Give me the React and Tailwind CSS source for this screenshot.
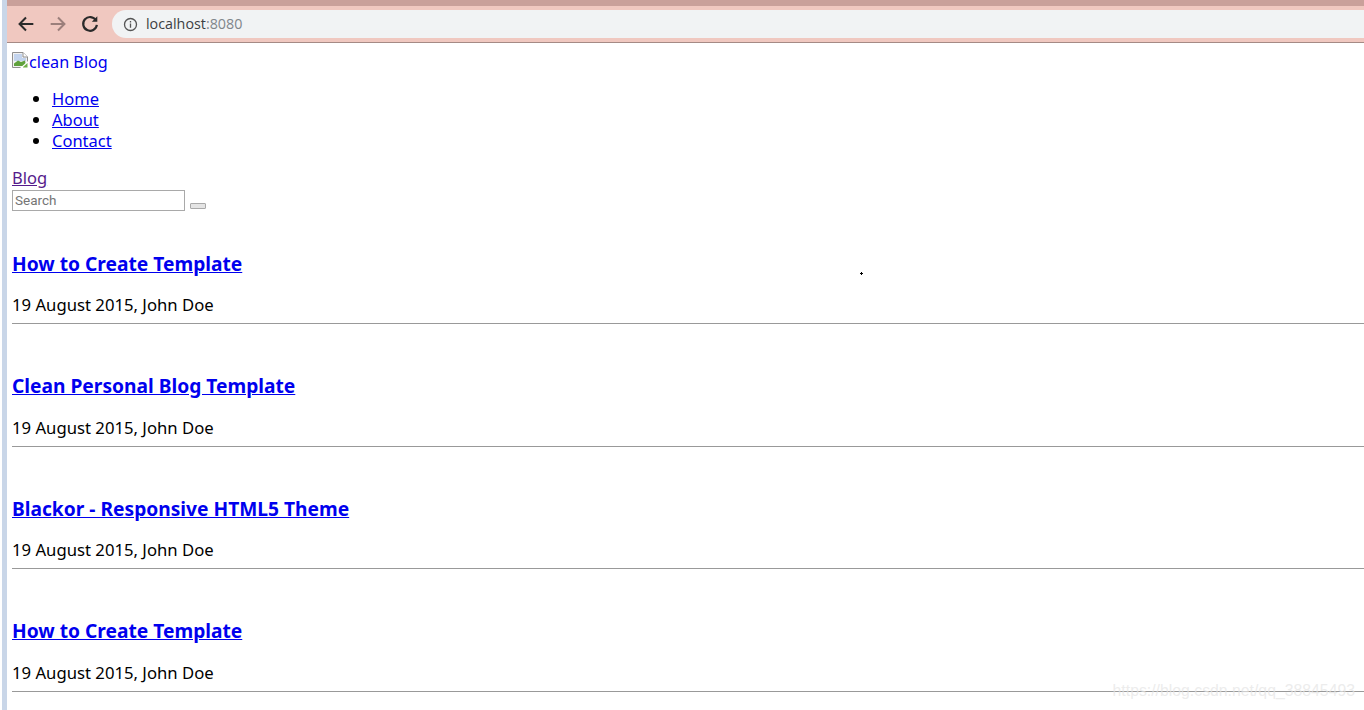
import React from 'react';

const posts = [
  'How to Create Template',
  'Clean Personal Blog Template',
  'Blackor - Responsive HTML5 Theme',
  'How to Create Template',
];

function BrokenImage() {
  return (
    <svg viewBox="0 0 16 16" className="w-4 h-4 shrink-0 mr-[1px] mt-[1px]">
      <path d="M0.5 0.5H11L15.5 5V15.5H0.5Z" fill="#f2f2f2" stroke="#8f8f8f" />
      <path d="M2 2H10V6H14V9H2Z" fill="#c3d4ee" />
      <path d="M2 14V11.5L6 8.5L9 10L13 8.5L14 14Z" fill="#5fa13c" />
      <path d="M11 .5V5H15.5" fill="#fff" stroke="#8f8f8f" />
      <path d="M16 9V16H8Z" fill="#fff" />
      <path d="M11 15L15.5 11V15.5H11Z" fill="#6fae46" />
    </svg>
  );
}

export default function App() {
  return (
    <div className="flex h-[710px] w-[1364px] overflow-hidden bg-white font-['Noto_Sans',sans-serif] text-black">

      {/* Faixa esquerda */}
      <div className="w-[7px] shrink-0 pl-[2px]">
        <div className="h-full bg-[#c9d6e8]" />
      </div>

      <div className="flex-1 min-w-0">

        {/* Barra do navegador */}
        <div className="h-[43px] border-b border-[#a58a85] bg-[#f0c8c0] border-t-[6px] border-t-[#c9a09a]">
          <div className="flex items-center h-[32px] pt-[4px]">
            <svg viewBox="0 0 24 24" className="w-[22px] h-[22px] ml-[8px]" fill="none" stroke="#2a2a2a" strokeWidth="2.2">
              <path d="M20 12H5M12 5l-7 7 7 7" />
            </svg>
            <svg viewBox="0 0 24 24" className="w-[22px] h-[22px] ml-[10px]" fill="none" stroke="#9b7f7b" strokeWidth="2.2">
              <path d="M4 12h15M12 5l7 7-7 7" />
            </svg>
            <svg viewBox="0 0 24 24" className="w-[22px] h-[22px] ml-[10px]" fill="none" stroke="#2a2a2a" strokeWidth="2.4">
              <path d="M18.5 8A7.5 7.5 0 1 0 19.5 13" />
              <path d="M20 3.5V9.5H14" fill="#2a2a2a" stroke="none" />
            </svg>
            <div className="flex items-center flex-1 h-[28px] ml-[11px] pl-[11px] rounded-l-full bg-[#f1f3f4]">
              <svg viewBox="0 0 16 16" className="w-[15px] h-[15px]" fill="none" stroke="#555" strokeWidth="1.4">
                <circle cx="8" cy="8" r="6.4" />
                <path d="M8 7v4.5M8 4.2v1.6" />
              </svg>
              <span className="ml-[8px] text-[14.3px] leading-none text-[#3c4043] font-['Open_Sans',sans-serif]">
                localhost<span className="text-[#80868b]">:8080</span>
              </span>
            </div>
          </div>
        </div>

        {/* Pagina */}
        <div className="pl-[5px]">
          <a href="#" className="flex items-start h-[21px] mt-[8px] text-[16.2px] leading-[21px] text-[#0000ee]">
            <BrokenImage />
            <span className="mt-[1px]">clean Blog</span>
          </a>

          <ul className="list-disc pl-[40px] mt-[16px] text-[16.5px] leading-[21px]">
            <li><a href="#" className="underline text-[#0000ee]">Home</a></li>
            <li><a href="#" className="underline text-[#0000ee]">About</a></li>
            <li><a href="#" className="underline text-[#0000ee]">Contact</a></li>
          </ul>

          <div className="mt-[16px] h-[23px] text-[16.5px] leading-[21px]">
            <a href="#" className="underline text-[#551a8b]">Blog</a>
          </div>

          <div className="flex items-end h-[21px]">
            <input
              placeholder="Search"
              className="w-[173px] h-[21px] px-[2px] pb-[2px] border border-[#a9a9a9] text-[13.5px] font-['Roboto',sans-serif] placeholder:text-[#757575] outline-none"
            />
            <button className="w-[16px] h-[6px] ml-[5px] mb-[2px] border border-[#a9a9a9] rounded-[1px] bg-[#e4e4e4]" />
          </div>

          {posts.map((title, i) => (
            <article key={i} className="h-[122.6px] pt-[40.6px]">
              <h3 className="text-[19.2px] leading-[24px] font-bold">
                <a href="#" className="underline text-[#0000ee]">{title}</a>
              </h3>
              <p className="mt-[18.4px] text-[16.7px] leading-[21px]">19 August 2015, John Doe</p>
              <hr className="mt-[8px] border-t border-[#999]" />
            </article>
          ))}
        </div>
      </div>

      <svg viewBox="0 0 3 3" className="absolute left-[860px] top-[272px] w-[3px] h-[3px]">
        <path d="M1 0H2V1H3V2H2V3H1V2H0V1H1Z" fill="#000" />
      </svg>
      <span className="absolute right-[9px] top-[681px] text-[15.8px] leading-[20px] text-[#e4e4e4]/70 font-['Liberation_Sans',sans-serif]">
        https://blog.csdn.net/qq_38845493
      </span>
    </div>
  );
}
